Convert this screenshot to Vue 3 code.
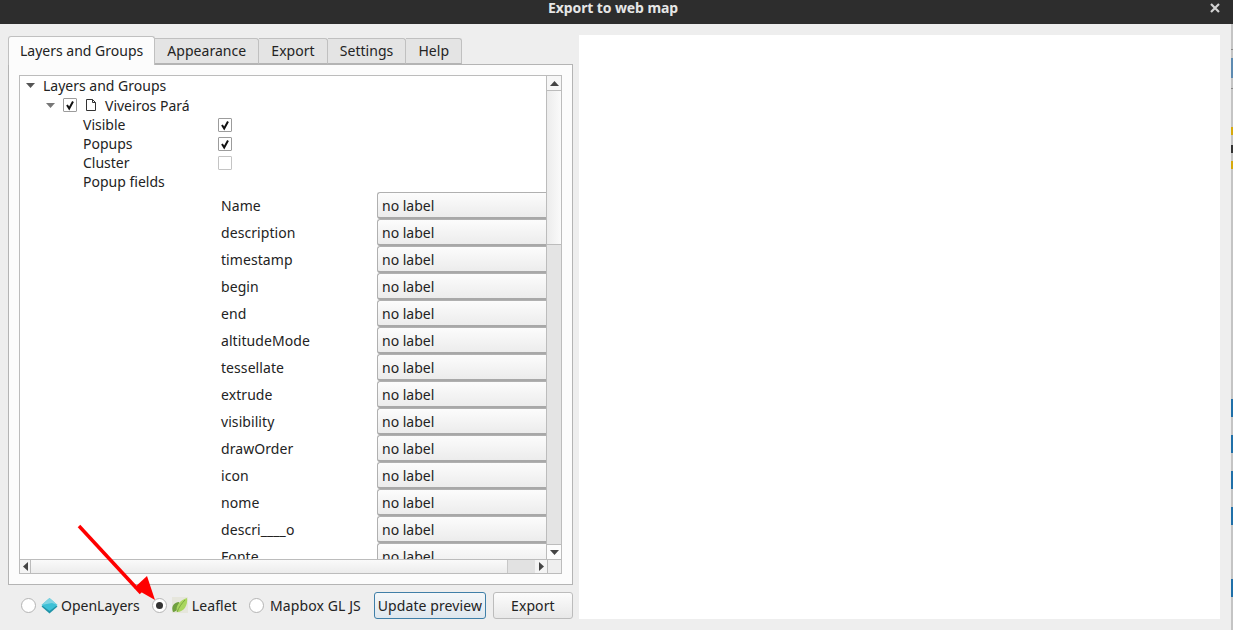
<script setup>
const tabs = ['Appearance', 'Export', 'Settings', 'Help']
const fields = ['Name', 'description', 'timestamp', 'begin', 'end', 'altitudeMode', 'tessellate', 'extrude', 'visibility', 'drawOrder', 'icon', 'nome', 'descri____o', 'Fonte']
</script>

<template>
  <div class="screen">
    <div class="dialog">
      <header class="titlebar">
        <span class="title">Export to web map</span>
        <svg class="close" width="10" height="10" viewBox="0 0 10 10"><path d="M1 1l8 8M9 1l-8 8" stroke="#d2d2d2" stroke-width="2.2" fill="none"/></svg>
      </header>
      <div class="body">
        <section class="left">
          <div class="tabs">
            <div class="tab active">Layers and Groups</div>
            <div v-for="t in tabs" :key="t" class="tab">{{ t }}</div>
          </div>
          <div class="pane">
            <div class="frame">
              <div class="frame-top">
                <div class="tree">
                  <div class="row r1">
                    <svg class="arrow" width="9" height="5" viewBox="0 0 9 5"><path d="M0 0h9L4.500 5z" fill="#555"/></svg>
                    <span>Layers and Groups</span>
                  </div>
                  <div class="row r2">
                    <svg class="arrow" width="9" height="5" viewBox="0 0 9 5"><path d="M0 0h9L4.500 5z" fill="#777"/></svg>
                    <span class="check on"><svg width="14" height="14" viewBox="0 0 14 14"><path d="M4 7l2.200 3.500L10 3.500" stroke="#111" stroke-width="2" fill="none"/></svg></span>
                    <svg class="doc" width="12" height="12" viewBox="0 0 12 12"><path d="M1.500 .5h6l3 3v8h-9zM7.500 .5v3h3" stroke="#333" fill="#fff"/></svg>
                    <span>Viveiros Pará</span>
                  </div>
                  <div class="row opt">
                    <span class="opt-label">Visible</span>
                    <span class="check on"><svg width="14" height="14" viewBox="0 0 14 14"><path d="M4 7l2.200 3.500L10 3.500" stroke="#111" stroke-width="2" fill="none"/></svg></span>
                  </div>
                  <div class="row opt">
                    <span class="opt-label">Popups</span>
                    <span class="check on"><svg width="14" height="14" viewBox="0 0 14 14"><path d="M4 7l2.200 3.500L10 3.500" stroke="#111" stroke-width="2" fill="none"/></svg></span>
                  </div>
                  <div class="row opt">
                    <span class="opt-label">Cluster</span>
                    <span class="check"></span>
                  </div>
                  <div class="row opt"><span class="opt-label">Popup fields</span></div>
                  <div class="fields">
                    <div v-for="f in fields" :key="f" class="field">
                      <span class="field-name">{{ f }}</span>
                      <div class="combo">no label</div>
                    </div>
                  </div>
                </div>
                <div class="vbar">
                  <div class="sb-btn v-up"><svg width="9" height="5" viewBox="0 0 9 5"><path d="M0 5h9L4.500 0z" fill="#444"/></svg></div>
                  <div class="v-thumb"></div>
                  <div class="v-groove"></div>
                  <div class="sb-btn v-down"><svg width="9" height="5" viewBox="0 0 9 5"><path d="M0 0h9L4.500 5z" fill="#444"/></svg></div>
                </div>
              </div>
              <div class="hbar">
                <div class="h-btn"><svg width="5" height="9" viewBox="0 0 5 9"><path d="M5 0v9L0 4.500z" fill="#444"/></svg></div>
                <div class="h-thumb"></div>
                <div class="h-groove"></div>
                <div class="h-btn right"><svg width="5" height="9" viewBox="0 0 5 9"><path d="M0 0v9l5-4.500z" fill="#444"/></svg></div>
                <div class="corner"></div>
              </div>
            </div>
          </div>
          <div class="footer">
            <span class="radio first"></span>
            <svg class="ficon" width="17" height="17" viewBox="0 0 17 17">
              <path d="M8.500 4L16.500 9.500 8.500 16.500 .5 9.500z" fill="#1f93a8"/>
              <path d="M8.500 1L16.500 8 8.500 14 .5 8z" fill="#3cc0d6"/>
              <path d="M8.500 1L16.500 8 11 6 .5 8z" fill="#7fd3e2"/>
            </svg>
            <span class="rlabel ol">OpenLayers</span>
            <span class="radio second on"></span>
            <svg class="ficon leaf" width="16" height="16" viewBox="0 0 16 16">
              <rect width="16" height="16" fill="#e6e6dc"/>
              <path d="M1 15C-1 10 1 6 7 5c1 5-1 9-6 10z" fill="#6f9f3f"/>
              <path d="M5 15C3 9 8 3 15 1c1 7-3 14-10 14z" fill="#a9d65e"/>
              <path d="M5 15C7 10 10 6 13 3" stroke="#7aa83f" fill="none"/>
            </svg>
            <span class="rlabel">Leaflet</span>
            <span class="radio third"></span>
            <span class="rlabel">Mapbox GL JS</span>
            <button class="btn primary">Update preview</button>
            <button class="btn">Export</button>
          </div>
        </section>
        <section class="preview"></section>
      </div>
    </div>
    <div class="strip"></div>
    <svg class="red-arrow" width="100" height="90" viewBox="0 0 100 90">
      <path d="M10 6L72 73" stroke="#fe0000" stroke-width="3.500" fill="none"/>
      <path d="M86 80L65 68 78 56z" fill="#fe0000"/>
    </svg>
  </div>
</template>

<style>
html, body { margin: 0; background: #eeeeee; overflow: hidden; }
</style>

<style scoped>
.screen {
  position: relative;
  display: flex;
  width: 1233px;
  height: 630px;
  overflow: hidden;
  font-family: "Noto Sans", sans-serif;
  font-size: 14px;
  color: #232323;
}
.dialog { width: 1231px; display: flex; flex-direction: column; background: #eeeeee; }
.strip {
  width: 2px;
  background: linear-gradient(to bottom,
    #2d2d2d 0 24px, #c4c4c4 24px 49px, #888 49px 50px, #c4c4c4 50px 58px, #5d8ab0 58px 78px, #c4c4c4 78px 88px, #888 88px 89px, #c4c4c4 89px 127px,
    #d6a90c 127px 135px, #c4c4c4 135px 145px, #333 145px 153px, #c4c4c4 153px 161px, #d6a90c 161px 169px, #c4c4c4 169px 399px,
    #1f6fa8 399px 417px, #c4c4c4 417px 435px, #1f6fa8 435px 453px, #c4c4c4 453px 471px, #1f6fa8 471px 489px, #c4c4c4 489px 507px,
    #1f6fa8 507px 525px, #c4c4c4 525px 579px, #1f6fa8 579px 597px, #c4c4c4 597px);
}
.titlebar {
  height: 24px;
  flex: none;
  background: #2d2d2d;
  display: flex;
  align-items: center;
  justify-content: center;
  position: relative;
}
.title { color: #e6e6e6; font-weight: 700; font-size: 14px; letter-spacing: -.1px; line-height: 16px; margin-top: -9px; margin-left: -5px; }
.close { position: absolute; left: 1210px; top: 3px; }
.body { flex: 1; display: flex; min-height: 0; padding: 11px 11px 11px 8px; gap: 6px; }
.left { width: 565px; flex: none; display: flex; flex-direction: column; padding-top: 1px; }
.tabs { display: flex; height: 28px; flex: none; align-items: flex-end; }
.tab {
  height: 26px;
  box-sizing: border-box;
  padding: 0 12px;
  line-height: 24px;
  letter-spacing: .05px;
  background: #e4e4e4;
  border: 1px solid #c0c0c0;
  border-left-width: 0;
  border-bottom: 1px solid #b4b4b4;
  border-radius: 0 3px 0 0;
  white-space: nowrap;
}
.tab.active {
  height: 29px;
  line-height: 27px;
  letter-spacing: 0;
  background: #fcfcfc;
  border-left-width: 1px;
  border-bottom: 0;
  border-radius: 3px 3px 0 0;
  padding: 0 11px 0 11px;
  position: relative;
  z-index: 1;
  margin-bottom: -1px;
}
.pane {
  height: 521px;
  flex: none;
  box-sizing: border-box;
  background: #fcfcfc;
  border: 1px solid #b4b4b4;
  padding: 10px;
}
.frame {
  height: 100%;
  box-sizing: border-box;
  border: 1px solid #bcbcbc;
  display: flex;
  flex-direction: column;
  background: #fff;
}
.frame-top { flex: 1; display: flex; min-height: 0; }
.tree { flex: 1; min-width: 0; overflow: hidden; }
.row { display: flex; align-items: center; height: 19px; white-space: nowrap; line-height: 19px; }
.row.r2 { height: 20px; }
.fields { margin-top: 1px; }
.r1 .arrow { margin-left: 6px; margin-right: 8px; }
.r2 .arrow { margin-left: 26px; margin-right: 8px; }
.r2 .check { margin-right: 8px; }
.r2 .doc { margin-right: 8px; }
.opt { padding-left: 63px; }
.opt-label { width: 135px; flex: none; }
.check {
  width: 14px;
  height: 14px;
  box-sizing: border-box;
  border: 1px solid #c4c4c4;
  background: #fff;
  border-radius: 1px;
  display: inline-flex;
  flex: none;
  position: relative;
}
.check.on { border-color: #9c9c9c; }
.check svg { position: absolute; left: -1px; top: -1px; }
.field { display: flex; height: 27px; align-items: center; padding-left: 201px; }
.field-name { width: 156px; flex: none; letter-spacing: .07px; }
.combo {
  flex: 1;
  height: 27px;
  box-sizing: border-box;
  border: 1px solid #b0b0b0;
  border-right: 0;
  border-bottom: 2px solid #a8a8a8;
  border-radius: 3px 0 0 3px;
  padding-left: 4px;
  line-height: 25px;
  background: linear-gradient(to bottom, #fcfcfc, #ececec);
}
.vbar { width: 14px; flex: none; border-left: 1px solid #bcbcbc; display: flex; flex-direction: column; }
.sb-btn { height: 14px; flex: none; display: flex; align-items: center; justify-content: center; background: #f6f6f6; }
.v-up { border-bottom: 1px solid #bcbcbc; }
.v-down { border-top: 1px solid #bcbcbc; background: #fcfcfc; }
.v-thumb { height: 154px; flex: none; box-sizing: border-box; border-bottom: 1px solid #bcbcbc; background: linear-gradient(to right, #ececec, #fafafa); }
.v-groove { flex: 1; background: #e4e4e4; }
.hbar { height: 13px; flex: none; display: flex; border-top: 1px solid #bcbcbc; background: #f4f4f4; }
.h-btn { width: 11px; flex: none; display: flex; align-items: center; justify-content: center; border-right: 1px solid #bcbcbc; box-sizing: border-box; }
.h-btn.right { width: 13px; border-right: 1px solid #bcbcbc; }
.h-thumb { width: 476px; flex: none; background: linear-gradient(to bottom, #fafafa, #ececec); }
.h-groove { width: 28px; flex: none; background: #e2e2e2; border-left: 1px solid #c8c8c8; box-sizing: border-box; }
.corner { flex: 1; background: #eeeeee; }
.footer { flex: 1; display: flex; align-items: center; padding-top: 6px; position: relative; }
.radio {
  width: 13px;
  height: 13px;
  border: 1px solid #b4b4b4;
  border-radius: 50%;
  background: #fff;
  flex: none;
  position: relative;
}
.radio.on::after {
  content: "";
  position: absolute;
  left: 3px;
  top: 3px;
  width: 7px;
  height: 7px;
  border-radius: 50%;
  background: #333;
}
.first { margin-left: 13px; }
.second { margin-left: 12px; }
.third { margin-left: 12px; }
.ficon { flex: none; margin-left: 5px; margin-right: 3px; }
.leaf { margin-right: 4px; }
.rlabel { white-space: nowrap; letter-spacing: .1px; }
.rlabel.ol { letter-spacing: 0; }
.third + .rlabel { margin-left: 6px; }
.btn {
  font: inherit;
  letter-spacing: .1px;
  color: inherit;
  height: 27px;
  box-sizing: border-box;
  padding: 0;
  border: 1px solid #bcbcbc;
  border-radius: 3px;
  background: linear-gradient(to bottom, #fcfcfc, #e8e8e8);
  width: 80px;
  margin-left: 7px;
  white-space: nowrap;
  flex: none;
}
.btn.primary {
  width: 112px;
  margin-left: 13px;
  border-color: #3f7fa8;
  background: linear-gradient(to bottom, #f4f7f9, #dfe7ee);
}
.preview { flex: 1; background: #ffffff; }
.red-arrow { position: absolute; left: 69px; top: 520px; pointer-events: none; }
</style>
